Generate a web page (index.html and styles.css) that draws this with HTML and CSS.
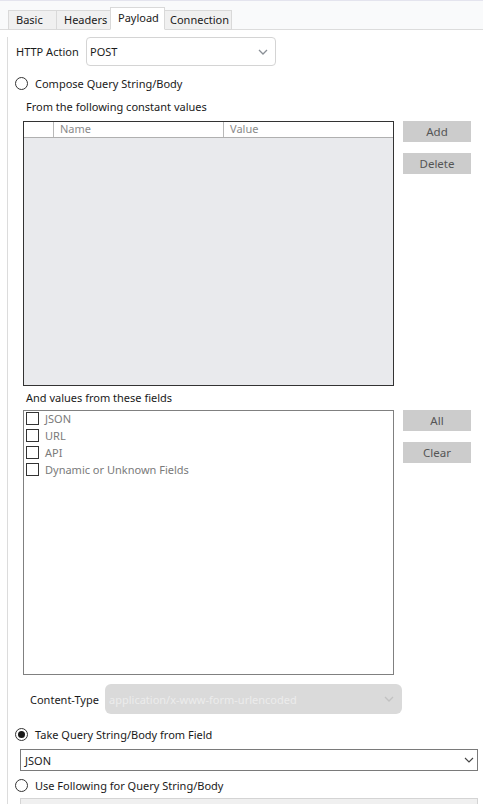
FILE: index.html
```html
<!DOCTYPE html>
<html lang="en">
<head>
  <meta charset="UTF-8" />
  <title>Payload</title>
  <link rel="stylesheet" href="styles.css">
</head>
<body>
  <div class="tabbar">
    <div class="tab basic">Basic</div>
    <div class="tab headers">Headers</div>
    <div class="tab active">Payload</div>
    <div class="tab connection">Connection</div>
  </div>

  <div class="panel">
    <!-- Action -->
    <div class="http-row">
      <span class="label">HTTP Action</span>
      <div class="select">
        <span>POST</span>
        <svg class="chev" width="10" height="6" viewBox="0 0 10 6"><polyline points="1,1 5,5 9,1" fill="none" stroke="#8a8f96" stroke-width="1.3"/></svg>
      </div>
    </div>

    <div class="radio-row">
      <span class="radio"></span>
      <span>Compose Query String/Body</span>
    </div>

    <div class="caption">From the following constant values</div>

    <div class="grid-row">
      <div class="table">
        <div class="thead">
          <div class="col first"></div>
          <div class="col name">Name</div>
          <div class="col value">Value</div>
        </div>
        <div class="tbody"></div>
      </div>
      <div class="buttons">
        <div class="btn">Add</div>
        <div class="btn">Delete</div>
      </div>
    </div>

    <div class="caption second">And values from these fields</div>

    <div class="grid-row list-row">
      <div class="list">
        <div class="item"><span class="check"></span>JSON</div>
        <div class="item"><span class="check"></span>URL</div>
        <div class="item"><span class="check"></span>API</div>
        <div class="item"><span class="check"></span>Dynamic or Unknown Fields</div>
      </div>
      <div class="buttons">
        <div class="btn">All</div>
        <div class="btn">Clear</div>
      </div>
    </div>

    <div class="ctype-row">
      <span class="label">Content-Type</span>
      <div class="select disabled">
        <span>application/x-www-form-urlencoded</span>
        <svg class="chev" width="10" height="6" viewBox="0 0 10 6"><polyline points="1,1 5,5 9,1" fill="none" stroke="#c2c2c2" stroke-width="1.3"/></svg>
      </div>
    </div>

    <div class="radio-row take">
      <span class="radio checked"></span>
      <span>Take Query String/Body from Field</span>
    </div>

    <div class="field-select">
      <span>JSON</span>
      <svg class="chev" width="10" height="6" viewBox="0 0 10 6"><polyline points="1,1 5,5 9,1" fill="none" stroke="#444" stroke-width="1.1"/></svg>
    </div>

    <div class="radio-row use">
      <span class="radio"></span>
      <span>Use Following for Query String/Body</span>
    </div>

    <div class="textbox"></div>
  </div>
</body>
</html>
```

FILE: styles.css
```css
* {
  box-sizing: border-box;
  margin: 0;
  padding: 0;
}

body {
  font-family: 'Segoe UI', 'Noto Sans', sans-serif;
  font-size: 11px;
  color: #1a1a1a;
  background: #fff;
  width: 483px;
  height: 804px;
  overflow: hidden;
}

.tabbar {
  height: 30px;
  background: #f9fafb;
  border-top: 1px solid #e4e4ee;
  border-bottom: 1px solid #dcdcdc;
  display: flex;
  align-items: flex-end;
  padding-left: 8px;
}

.tab {
  height: 20px;
  margin-bottom: -1px;
  padding-left: 7px;
  line-height: 18px;
  background: #f0f0f0;
  border: 1px solid #d9d9d9;
  border-right: none;
  color: #1a1a1a;
}

.tab.basic {
  width: 48px;
}

.tab.headers {
  width: 54px;
}

.tab.active {
  width: 55px;
  height: 23px;
  background: #fff;
  border-right: 1px solid #d9d9d9;
  border-bottom-color: #fff;
  line-height: 19px;
}

.tab.connection {
  width: 67px;
  padding-left: 5px;
  border-left: none;
  border-right: 1px solid #d9d9d9;
}

.panel {
  margin-left: 7px;
  border-left: 1px solid #dcdcdc;
  height: 780px;
}

.http-row {
  margin-top: 7px;
  height: 29px;
  display: flex;
  align-items: center;
  padding-left: 8px;
}

.http-row .label {
  width: 70px;
}

.select {
  width: 190px;
  height: 29px;
  border: 1px solid #d4d4d4;
  border-radius: 4px;
  display: flex;
  align-items: center;
  justify-content: space-between;
  padding: 0 7px 0 3px;
  background: #fff;
}

.radio-row {
  margin-top: 10px;
  height: 14px;
  display: flex;
  align-items: center;
  padding-left: 7px;
  gap: 7px;
}

.radio {
  width: 13px;
  height: 13px;
  border: 1px solid #333;
  border-radius: 50%;
  display: inline-flex;
  align-items: center;
  justify-content: center;
  flex-shrink: 0;
}

.radio.checked::after {
  content: '';
  width: 7px;
  height: 7px;
  border-radius: 50%;
  background: #1a1a1a;
}

.caption {
  margin-top: 10px;
  height: 14px;
  line-height: 14px;
  padding-left: 18px;
}

.caption.second {
  margin-top: 5px;
}

.grid-row {
  margin-top: 7px;
  display: flex;
  padding-left: 15px;
  gap: 9px;
}

.list-row {
  margin-top: 5px;
}

.table {
  width: 371px;
  height: 265px;
  border: 1px solid #333;
  display: flex;
  flex-direction: column;
}

.thead {
  height: 16px;
  display: flex;
  background: #fff;
  border-bottom: 1px solid #b0b0b0;
  color: #8a8a8a;
}

.col {
  line-height: 14px;
  padding-left: 6px;
}

.col.first {
  width: 30px;
  border-right: 1px solid #b8b8b8;
}

.col.name {
  width: 170px;
  border-right: 1px solid #b8b8b8;
}

.col.value {
  flex: 1;
}

.tbody {
  flex: 1;
  background: #e9eaed;
}

.buttons {
  display: flex;
  flex-direction: column;
  gap: 11px;
}

.btn {
  width: 68px;
  height: 21px;
  background: #cccccc;
  color: #555;
  text-align: center;
  line-height: 21px;
  font-size: 11.5px;
}

.list {
  width: 371px;
  height: 265px;
  border: 1px solid #808080;
  color: #7a7a7a;
}

.item {
  height: 17px;
  display: flex;
  align-items: center;
  padding-left: 2px;
  padding-bottom: 2px;
  gap: 6px;
}

.check {
  width: 13px;
  height: 13px;
  border: 1px solid #333;
  background: #fff;
}

.ctype-row {
  margin-top: 9px;
  height: 30px;
  display: flex;
  align-items: center;
  padding-left: 22px;
}

.ctype-row .label {
  width: 75px;
}

.select.disabled {
  width: 297px;
  height: 30px;
  background: #dadada;
  border: none;
  border-radius: 6px;
  color: #ececec;
  padding: 0 8px 0 4px;
}

.radio-row.take {
  margin-top: 13px;
}

.field-select {
  margin: 8px 0 0 12px;
  width: 458px;
  height: 22px;
  border: 1px solid #7a7a7a;
  display: flex;
  align-items: center;
  justify-content: space-between;
  padding: 0 3px 0 4px;
}

.radio-row.use {
  margin-top: 7px;
}

.textbox {
  margin: 6px 0 0 12px;
  width: 458px;
  height: 30px;
  border: 1px solid #d4d4d4;
  background: #f0f0f0;
}
```
